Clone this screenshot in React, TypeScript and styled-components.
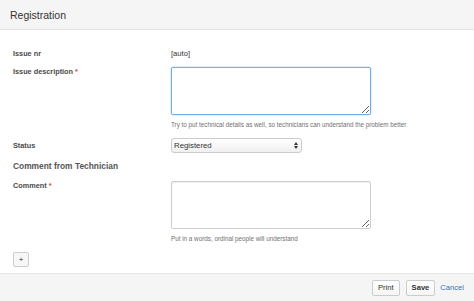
import React from "react";
import styled, { createGlobalStyle } from "styled-components";

const GlobalStyle = createGlobalStyle`
  html, body {
    margin: 0;
    padding: 0;
    background: #ffffff;
    font-family: "Liberation Sans", Arial, sans-serif;
    color: #333333;
  }
`;

const Page = styled.div`
  width: 474px;
  height: 301px;
  display: flex;
  flex-direction: column;
  overflow: hidden;
`;

const Header = styled.div`
  height: 29px;
  flex: none;
  display: flex;
  align-items: center;
  padding-left: 10px;
  background: #f5f5f5;
  border-bottom: 1px solid #e4e4e4;
  font-size: 10.5px;
  color: #333333;
`;

const Body = styled.div`
  flex: 1;
  padding: 19px 0 0 13px;
  display: flex;
  flex-direction: column;
`;

const Row = styled.div<{ $align?: string; $top?: number }>`
  display: flex;
  align-items: ${(p) => p.$align || "flex-start"};
  margin-top: ${(p) => p.$top || 0}px;
`;

const Label = styled.div`
  width: 158px;
  flex: none;
  font-size: 7.3px;
  line-height: 10px;
  font-weight: bold;
  color: #4a4a4a;
`;

const Required = styled.span`
  color: #d04437;
  margin-left: 2px;
`;

const Value = styled.div`
  font-size: 7.6px;
  line-height: 10px;
  color: #333333;
`;

const TextArea = styled.textarea<{ $focused?: boolean }>`
  display: block;
  box-sizing: border-box;
  width: 200px;
  height: 48px;
  margin: 0;
  padding: 2px 3px;
  font-family: "Liberation Sans", Arial, sans-serif;
  font-size: 7.5px;
  border-radius: 2px;
  outline: none;
  border: 1px solid ${(p) => (p.$focused ? "#74aee6" : "#cccccc")};
  box-shadow: ${(p) => (p.$focused ? "0 0 2px #9ac7f0" : "inset 0 1px 1px #f0f0f0")};
  caret-color: #333333;
`;

const Help = styled.div<{ $top: number }>`
  margin: ${(p) => p.$top}px 0 0 158px;
  font-size: 6.3px;
  line-height: 8px;
  color: #707070;
`;

const SelectWrap = styled.div`
  position: relative;
  width: 131px;
  height: 15px;
`;

const Select = styled.select`
  display: block;
  appearance: none;
  box-sizing: border-box;
  width: 131px;
  height: 15px;
  margin: 0;
  padding: 0 0 0 2px;
  border: 1px solid #cccccc;
  border-radius: 3px;
  background: linear-gradient(#ffffff, #f0f0f0);
  font-family: "Liberation Sans", Arial, sans-serif;
  font-size: 7.8px;
  color: #333333;
`;

const Arrows = styled.svg`
  position: absolute;
  right: 4px;
  top: 4px;
  pointer-events: none;
`;

const Heading = styled.div`
  margin-top: 8px;
  font-size: 8.4px;
  line-height: 11px;
  font-weight: bold;
  color: #555555;
`;

const SmallButton = styled.button`
  display: block;
  box-sizing: border-box;
  width: 16px;
  height: 15px;
  margin-top: 9px;
  padding: 0;
  border: 1px solid #cccccc;
  border-radius: 2px;
  background: #f7f7f7;
  font-family: "Liberation Sans", Arial, sans-serif;
  font-size: 8px;
  line-height: 12px;
  color: #333333;
`;

const Footer = styled.div`
  height: 28px;
  flex: none;
  box-sizing: border-box;
  display: flex;
  align-items: center;
  justify-content: flex-end;
  gap: 6px;
  padding-right: 10px;
  background: #f5f5f5;
  border-top: 1px solid #e4e4e4;
`;

const Button = styled.button<{ $primary?: boolean }>`
  box-sizing: border-box;
  height: 16px;
  padding: 0 5px;
  border: 1px solid #cccccc;
  border-radius: 2px;
  background: linear-gradient(#ffffff, #f5f5f5);
  font-family: "Liberation Sans", Arial, sans-serif;
  font-size: 7.6px;
  font-weight: ${(p) => (p.$primary ? "bold" : "normal")};
  color: #333333;
`;

const LinkButton = styled.a`
  font-size: 7.6px;
  color: #3572b0;
  text-decoration: none;
  margin-left: -1px;
`;

export default function App() {
  return (
    <Page>
      <GlobalStyle />
      <Header>Registration</Header>
      <Body>
        <Row $align="center">
          <Label>Issue nr</Label>
          <Value>[auto]</Value>
        </Row>
        <Row $top={8}>
          <Label>
            Issue description<Required>*</Required>
          </Label>
          <TextArea $focused autoFocus />
        </Row>
        <Help $top={6}>Try to put technical details as well, so technicians can understand the problem better</Help>
        <Row $align="center" $top={9}>
          <Label>Status</Label>
          <SelectWrap>
            <Select defaultValue="Registered">
              <option>Registered</option>
              <option>In progress</option>
              <option>Resolved</option>
            </Select>
            <Arrows width="4" height="7" viewBox="0 0 4 7">
              <path d="M0 3 L2 0 L4 3 Z M0 4 L2 7 L4 4 Z" fill="#333333" />
            </Arrows>
          </SelectWrap>
        </Row>
        <Heading>Comment from Technician</Heading>
        <Row $top={9}>
          <Label>
            Comment<Required>*</Required>
          </Label>
          <TextArea />
        </Row>
        <Help $top={6}>Put in a words, ordinal people will understand</Help>
        <SmallButton>+</SmallButton>
      </Body>
      <Footer>
        <Button>Print</Button>
        <Button $primary>Save</Button>
        <LinkButton href="#">Cancel</LinkButton>
      </Footer>
    </Page>
  );
}
